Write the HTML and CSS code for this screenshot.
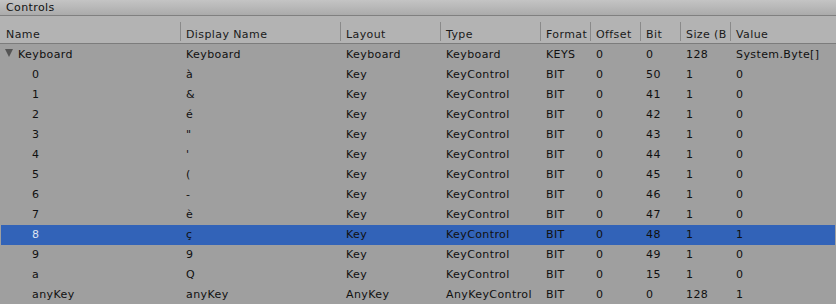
FILE: index.html
```html
<!DOCTYPE html>
<html lang="en">
<head>
  <meta charset="UTF-8">
  <title>Controls</title>
  <link rel="stylesheet" href="styles.css">
</head>
<body>

  <!-- Panel title -->
  <div class="title-bar">Controls</div>

  <!-- Column headers -->
  <div class="row head">
    <div class="cell">Name</div>
    <div class="cell">Display Name</div>
    <div class="cell">Layout</div>
    <div class="cell">Type</div>
    <div class="cell">Format</div>
    <div class="cell">Offset</div>
    <div class="cell">Bit</div>
    <div class="cell">Size (B</div>
    <div class="cell">Value</div>
  </div>

  <!-- Control rows -->
  <div class="rows">
    <div class="row">
      <div class="cell name root"><span class="arrow"></span>Keyboard</div>
      <div class="cell">Keyboard</div><div class="cell">Keyboard</div><div class="cell">Keyboard</div>
      <div class="cell">KEYS</div><div class="cell">0</div><div class="cell">0</div><div class="cell">128</div><div class="cell">System.Byte[]</div>
    </div>
    <div class="row">
      <div class="cell name">0</div><div class="cell">à</div><div class="cell">Key</div><div class="cell">KeyControl</div>
      <div class="cell">BIT</div><div class="cell">0</div><div class="cell">50</div><div class="cell">1</div><div class="cell">0</div>
    </div>
    <div class="row">
      <div class="cell name">1</div><div class="cell">&amp;</div><div class="cell">Key</div><div class="cell">KeyControl</div>
      <div class="cell">BIT</div><div class="cell">0</div><div class="cell">41</div><div class="cell">1</div><div class="cell">0</div>
    </div>
    <div class="row">
      <div class="cell name">2</div><div class="cell">é</div><div class="cell">Key</div><div class="cell">KeyControl</div>
      <div class="cell">BIT</div><div class="cell">0</div><div class="cell">42</div><div class="cell">1</div><div class="cell">0</div>
    </div>
    <div class="row">
      <div class="cell name">3</div><div class="cell">"</div><div class="cell">Key</div><div class="cell">KeyControl</div>
      <div class="cell">BIT</div><div class="cell">0</div><div class="cell">43</div><div class="cell">1</div><div class="cell">0</div>
    </div>
    <div class="row">
      <div class="cell name">4</div><div class="cell">'</div><div class="cell">Key</div><div class="cell">KeyControl</div>
      <div class="cell">BIT</div><div class="cell">0</div><div class="cell">44</div><div class="cell">1</div><div class="cell">0</div>
    </div>
    <div class="row">
      <div class="cell name">5</div><div class="cell">(</div><div class="cell">Key</div><div class="cell">KeyControl</div>
      <div class="cell">BIT</div><div class="cell">0</div><div class="cell">45</div><div class="cell">1</div><div class="cell">0</div>
    </div>
    <div class="row">
      <div class="cell name">6</div><div class="cell">-</div><div class="cell">Key</div><div class="cell">KeyControl</div>
      <div class="cell">BIT</div><div class="cell">0</div><div class="cell">46</div><div class="cell">1</div><div class="cell">0</div>
    </div>
    <div class="row">
      <div class="cell name">7</div><div class="cell">è</div><div class="cell">Key</div><div class="cell">KeyControl</div>
      <div class="cell">BIT</div><div class="cell">0</div><div class="cell">47</div><div class="cell">1</div><div class="cell">0</div>
    </div>
    <div class="row selected">
      <div class="cell name">8</div><div class="cell">ç</div><div class="cell">Key</div><div class="cell">KeyControl</div>
      <div class="cell">BIT</div><div class="cell">0</div><div class="cell">48</div><div class="cell">1</div><div class="cell">1</div>
    </div>
    <div class="row">
      <div class="cell name">9</div><div class="cell">9</div><div class="cell">Key</div><div class="cell">KeyControl</div>
      <div class="cell">BIT</div><div class="cell">0</div><div class="cell">49</div><div class="cell">1</div><div class="cell">0</div>
    </div>
    <div class="row">
      <div class="cell name">a</div><div class="cell">Q</div><div class="cell">Key</div><div class="cell">KeyControl</div>
      <div class="cell">BIT</div><div class="cell">0</div><div class="cell">15</div><div class="cell">1</div><div class="cell">0</div>
    </div>
    <div class="row">
      <div class="cell name">anyKey</div><div class="cell">anyKey</div><div class="cell">AnyKey</div><div class="cell">AnyKeyControl</div>
      <div class="cell">BIT</div><div class="cell">0</div><div class="cell">0</div><div class="cell">128</div><div class="cell">1</div>
    </div>
  </div>

</body>
</html>
```

FILE: styles.css
```css
body {
  margin: 0;
  background-color: #9f9f9f;
  font-family: "DejaVu Sans", Verdana, sans-serif;
  font-size: 11px;
  letter-spacing: 0.4px;
  color: #101010;
  overflow: hidden;
}
.title-bar {
  height: 15px;
  line-height: 15px;
  padding-left: 6px;
  background: linear-gradient(#c4c4c4, #ababab);
  border-bottom: 1px solid #808080;
  color: #111;
}
.row {
  display: grid;
  grid-template-columns: 180px 160px 100px 100px 50px 50px 40px 50px 1fr;
  height: 20px;
  line-height: 20px;
}
.cell {
  padding-left: 6px;
  white-space: nowrap;
  overflow: hidden;
}
.head {
  height: 27px;
  align-items: end;
  background-color: #b3b3b3;
  border-bottom: 1px solid #7c7c7c;
  color: #1a1a1a;
}
.head .cell {
  box-sizing: border-box;
  height: 19px;
  line-height: 12px;
  padding-top: 7px;
  margin-bottom: 2px;
  padding-left: 5px;
  border-left: 1px solid #8a8a8a;
}
.head .cell:first-child {
  border-left: none;
  padding-left: 6px;
}
.rows {
  padding-top: 1px;
}
.name {
  padding-left: 32px;
}
.name.root {
  padding-left: 5px;
}
.arrow {
  display: inline-block;
  width: 0;
  height: 0;
  margin-right: 5px;
  vertical-align: 1px;
  border-left: 4px solid transparent;
  border-right: 4px solid transparent;
  border-top: 8px solid #555;
}
.selected {
  background: linear-gradient(#3263b8, #3263b8) 1px 0 / calc(100% - 2px) 100% no-repeat;
}
.selected .name {
  color: #dde4f2;
}
```
